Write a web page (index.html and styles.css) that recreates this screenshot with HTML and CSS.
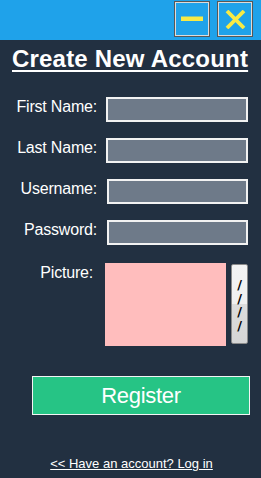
FILE: index.html
```html
<!DOCTYPE html>
<html lang="en">
  <head>
    <meta charset="UTF-8" />
    <meta name="viewport" content="width=device-width, initial-scale=1.0" />
    <title>Create New Account</title>
    <link rel="stylesheet" href="styles.css">
  </head>
  <body>
    <div class="window">
      <!-- Title bar -->
      <div class="titlebar">
        <button class="win-btn" title="Minimize">
          <svg width="22" height="6" viewBox="0 0 22 6"><rect x="0" y="0.5" width="22" height="4.5" fill="#f8ea45"/></svg>
        </button>
        <button class="win-btn" title="Close">
          <svg width="21" height="19" viewBox="0 0 21 19"><path d="M2 1 L19 18 M19 1 L2 18" stroke="#f8ea45" stroke-width="3.8" fill="none"/></svg>
        </button>
      </div>

      <h1 class="title">Create New Account</h1>

      <!-- Form -->
      <div class="form">
        <label class="label">First Name:</label>
        <input class="field" type="text" />

        <label class="label">Last Name:</label>
        <input class="field" type="text" />

        <label class="label">Username:</label>
        <input class="field shift" type="text" />

        <label class="label">Password:</label>
        <input class="field shift" type="password" />

        <label class="label pic-label">Picture:</label>
        <div class="picture-row">
          <div class="picture"></div>
          <button class="browse">/<br>/<br>/<br>/</button>
        </div>
      </div>

      <button class="register">Register</button>

      <div class="login">
        <a href="#">&lt;&lt; Have an account? Log in</a>
      </div>
    </div>
  </body>
</html>
```

FILE: styles.css
```css
:root {
  --bar-bg: #1fa2ea;
  --main-bg: #223041;
  --field-bg: #6e7a89;
  --pink: #ffbdbd;
  --green: #26c485;
  --text: #ffffff;
}

body {
  margin: 0;
  background: var(--main-bg);
  font-family: "Liberation Sans", Arial, sans-serif;
  color: var(--text);
}

.window {
  width: 261px;
  height: 478px;
  overflow: hidden;
}

.titlebar {
  height: 40px;
  background: var(--bar-bg);
  display: flex;
  justify-content: flex-end;
  align-items: flex-start;
  gap: 7px;
  padding: 1px 8px 0 0;
  box-sizing: border-box;
}

.win-btn {
  width: 36px;
  height: 36px;
  padding: 0;
  background: var(--bar-bg);
  border: 1px solid #575757;
  box-shadow: inset 0 0 0 1px #dcdcdc;
  display: flex;
  align-items: center;
  justify-content: center;
}

.title {
  margin: 0;
  padding: 5px 0 0 12px;
  font-size: 24px;
  line-height: 28px;
  font-weight: bold;
  text-decoration: underline;
  text-decoration-thickness: 2px;
  text-underline-offset: 3px;
  letter-spacing: 0.2px;
}

.form {
  display: grid;
  grid-template-columns: 97px 142px;
  column-gap: 9px;
  row-gap: 16px;
  margin-top: 24px;
}

.label {
  font-size: 16px;
  line-height: 18px;
  padding-top: 1px;
  text-align: right;
  letter-spacing: -0.2px;
}

.field {
  height: 25px;
  box-sizing: border-box;
  margin: 0;
  border: 2px solid #f2f2f2;
  background: var(--field-bg);
}

.shift {
  margin-left: 1px;
}

.pic-label {
  margin-top: 2px;
  padding-right: 4px;
}

.picture-row {
  margin-top: 2px;
  margin-left: -1px;
  display: flex;
  align-items: flex-start;
  gap: 5px;
}

.picture {
  width: 122px;
  height: 83px;
  background: var(--pink);
}

.browse {
  width: 17px;
  height: 80px;
  margin-top: 1px;
  padding: 2px 0 0 0;
  border: 1px solid #8a8a8a;
  border-radius: 2px;
  background: linear-gradient(#f3f3f3, #f0f0f0 50%, #dcdcdc 50%, #d6d6d6);
  font-family: "DejaVu Sans", sans-serif;
  font-size: 13px;
  font-weight: bold;
  line-height: 13.5px;
  color: #000;
}

.register {
  display: block;
  width: 218px;
  height: 39px;
  margin: 30px 0 0 32px;
  padding: 0;
  background: var(--green);
  border: 1px solid #f4f4f4;
  color: var(--text);
  font-family: "Liberation Sans", Arial, sans-serif;
  font-size: 22px;
  letter-spacing: -0.3px;
}

.login {
  margin-top: 39px;
  text-align: center;
  padding-left: 2px;
}

.login a {
  color: var(--text);
  font-size: 13px;
  line-height: 16px;
  text-decoration: underline;
}
```
